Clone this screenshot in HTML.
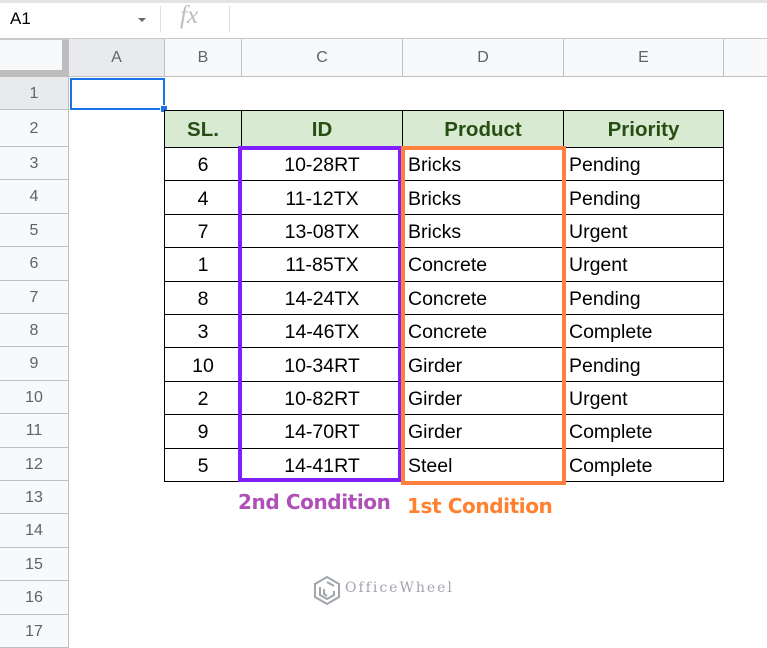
<!DOCTYPE html>
<html><head><meta charset="utf-8"><style>
*{margin:0;padding:0;box-sizing:border-box}
body{width:767px;height:630px;overflow:hidden;background:#fff;position:relative;font-family:"Liberation Sans",Arial,sans-serif}
.a{position:absolute}
.ch{position:absolute;top:39px;height:37px;background:#f8f9fa;border-right:1px solid #c0c0c0;color:#5f6368;font-size:16px;text-align:center;line-height:37px}
.rh{position:absolute;left:0;width:69px;background:#f8f9fa;border-bottom:1px solid #c0c0c0;border-right:1px solid #c0c0c0;color:#5f6368;font-size:16px;text-align:center}
table{position:absolute;left:164px;top:110px;border-collapse:collapse;font-size:19.5px;color:#000}
td{border:1.5px solid #000;padding:0 5px;white-space:nowrap}
tr.h td{background:#d9ead3;color:#274e13;font-weight:bold;text-align:center;height:37px;font-size:20.5px;padding-top:2px}
tr.d td{height:33.4px;padding-top:3px}
td.c{text-align:center}
</style></head><body>
<div class="a" style="left:0;top:0;width:767px;height:3px;background:#e3e3e3"></div>
<div class="a" style="left:10px;top:9px;font-size:17px;color:#000">A1</div>
<div class="a" style="left:138px;top:18px;width:0;height:0;border-left:4px solid transparent;border-right:4px solid transparent;border-top:4px solid #666"></div>
<div class="a" style="left:160px;top:6px;width:1px;height:26px;background:#e0e0e0"></div>
<div class="a" style="left:180px;top:2px;font-family:'Liberation Serif',serif;font-style:italic;font-size:25px;color:#bdbdbd">fx</div>
<div class="a" style="left:229px;top:6px;width:1px;height:26px;background:#e0e0e0"></div>
<div class="a" style="left:0;top:38px;width:767px;height:2px;background:#c8c8c8"></div>
<div class="a" style="left:0;top:40px;width:62px;height:30px;background:#f8f9fa"></div>
<div class="a" style="left:62px;top:40px;width:7px;height:37px;background:#bdbdbd"></div>
<div class="a" style="left:0;top:70px;width:69px;height:7px;background:#bdbdbd"></div>
<div class="ch" style="left:69px;width:96px;background:#e8eaed">A</div>
<div class="ch" style="left:165px;width:77px">B</div>
<div class="ch" style="left:242px;width:161px">C</div>
<div class="ch" style="left:403px;width:161px">D</div>
<div class="ch" style="left:564px;width:160px">E</div>
<div class="ch" style="left:724px;width:43px;border-right:none"></div>
<div class="a" style="left:69px;top:76px;width:698px;height:1px;background:#c0c0c0"></div>

<div class="rh" style="top:77px;height:33px;line-height:33px;background:#e8eaed">1</div>
<div class="rh" style="top:110px;height:37px;line-height:37px">2</div>
<div class="rh" style="top:147px;height:33.4px;line-height:33px">3</div>
<div class="rh" style="top:180.4px;height:33.4px;line-height:33px">4</div>
<div class="rh" style="top:213.8px;height:33.4px;line-height:33px">5</div>
<div class="rh" style="top:247.2px;height:33.4px;line-height:33px">6</div>
<div class="rh" style="top:280.6px;height:33.4px;line-height:33px">7</div>
<div class="rh" style="top:314px;height:33.4px;line-height:33px">8</div>
<div class="rh" style="top:347.4px;height:33.4px;line-height:33px">9</div>
<div class="rh" style="top:380.8px;height:33.4px;line-height:33px">10</div>
<div class="rh" style="top:414.2px;height:33.4px;line-height:33px">11</div>
<div class="rh" style="top:447.6px;height:33.4px;line-height:33px">12</div>
<div class="rh" style="top:481px;height:33.4px;line-height:33px">13</div>
<div class="rh" style="top:514.4px;height:33.4px;line-height:33px">14</div>
<div class="rh" style="top:547.8px;height:33.4px;line-height:33px">15</div>
<div class="rh" style="top:581.2px;height:33.4px;line-height:33px">16</div>
<div class="rh" style="top:614.6px;height:33.4px;line-height:33px">17</div>

<div class="a" style="left:70px;top:78px;width:95px;height:32px;border:2px solid #1a73e8"></div>
<div class="a" style="left:160px;top:105px;width:8px;height:8px;background:#1a73e8;border:1px solid #fff"></div>

<table>
<colgroup><col style="width:77px"><col style="width:161px"><col style="width:161px"><col style="width:160px"></colgroup>
<tr class="h"><td>SL.</td><td>ID</td><td>Product</td><td>Priority</td></tr>
<tr class="d"><td class="c">6</td><td class="c">10-28RT</td><td>Bricks</td><td>Pending</td></tr>
<tr class="d"><td class="c">4</td><td class="c">11-12TX</td><td>Bricks</td><td>Pending</td></tr>
<tr class="d"><td class="c">7</td><td class="c">13-08TX</td><td>Bricks</td><td>Urgent</td></tr>
<tr class="d"><td class="c">1</td><td class="c">11-85TX</td><td>Concrete</td><td>Urgent</td></tr>
<tr class="d"><td class="c">8</td><td class="c">14-24TX</td><td>Concrete</td><td>Pending</td></tr>
<tr class="d"><td class="c">3</td><td class="c">14-46TX</td><td>Concrete</td><td>Complete</td></tr>
<tr class="d"><td class="c">10</td><td class="c">10-34RT</td><td>Girder</td><td>Pending</td></tr>
<tr class="d"><td class="c">2</td><td class="c">10-82RT</td><td>Girder</td><td>Urgent</td></tr>
<tr class="d"><td class="c">9</td><td class="c">14-70RT</td><td>Girder</td><td>Complete</td></tr>
<tr class="d"><td class="c">5</td><td class="c">14-41RT</td><td>Steel</td><td>Complete</td></tr>
</table>

<div class="a" style="left:238px;top:146px;width:164px;height:336px;border:4px solid #7f1fff"></div>
<div class="a" style="left:401px;top:146px;width:165px;height:339px;border:4px solid #ff7f3f"></div>
<div class="a" style="left:238px;top:490px;font-size:20px;font-weight:bold;color:#b04fb8;font-family:'DejaVu Sans',sans-serif;letter-spacing:-0.4px">2nd Condition</div>
<div class="a" style="left:407px;top:494px;font-size:20px;font-weight:bold;color:#ff8030;font-family:'DejaVu Sans',sans-serif;letter-spacing:-0.4px">1st Condition</div>

<svg class="a" style="left:312px;top:574px" width="30" height="32" viewBox="0 0 30 32"><g fill="none" stroke="#a0a4ab" stroke-width="2"><path d="M15 3 L27 10 L27 23 L15 30 L3 23 L3 10 Z"/><path d="M15 8 L22 12 M8 13 L8 21 L15 25 L22 21 L22 17"/><path d="M12 15 L12 20 L15 22"/></g></svg>
<div class="a" style="left:345px;top:580px;font-family:'DejaVu Serif','Liberation Serif',serif;font-size:14px;letter-spacing:2px;color:#a0a4ab">OfficeWheel</div>
</body></html>
